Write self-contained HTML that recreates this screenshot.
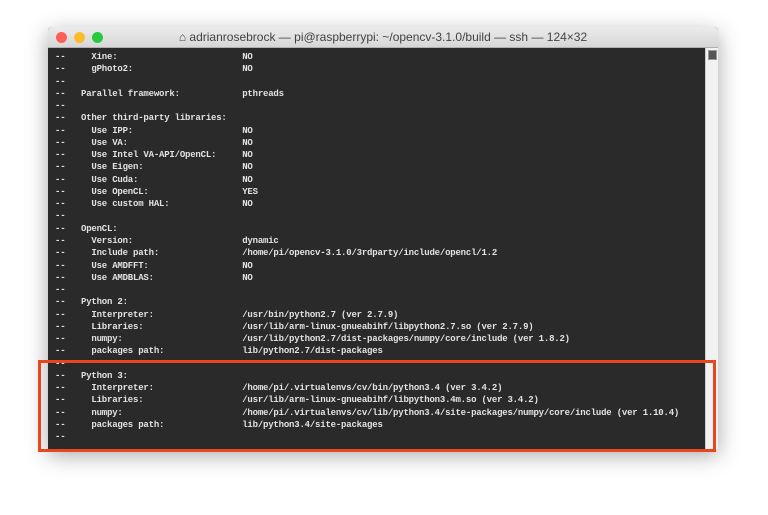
<!DOCTYPE html>
<html><head><style>
html,body{margin:0;padding:0;background:#fff;width:768px;height:515px;overflow:hidden;position:relative}
.win{position:absolute;left:48px;top:27px;width:670px;height:422px;background:#2a2a2a;box-shadow:0 6px 22px rgba(0,0,0,.35);border-radius:4px 4px 0 0;overflow:hidden}
.title{height:20px;background:linear-gradient(#ececec,#d6d6d6);border-bottom:1px solid #b0b0b0;font:12px "Liberation Sans",sans-serif;color:#444;text-align:center;line-height:20px;position:relative}
.dot{position:absolute;top:5px;width:11px;height:11px;border-radius:50%}
.sb{position:absolute;right:0;top:21px;width:12px;bottom:0;background:#f2f2f2;border-left:1px solid #ccc}
.sb div{margin:2px 2px;width:7px;height:8px;background:#555;border:1px solid #999}
pre{position:absolute;left:7px;top:24px;margin:0;font:bold 9px/12.26px "Liberation Mono",monospace;color:#e2e2e2;letter-spacing:-0.2px}
.red{position:absolute;left:38px;top:360px;width:672px;height:86px;border:3px solid #e8461c}
</style></head><body>
<div class="win">
<div class="title"><span class="dot" style="left:8px;background:#fc5f57"></span><span class="dot" style="left:26px;background:#fdbc2e"></span><span class="dot" style="left:44px;background:#28c840"></span>⌂ adrianrosebrock — pi@raspberrypi: ~/opencv-3.1.0/build — ssh — 124×32</div>
<div class="sb"><div></div></div>
<pre>--     Xine:                        NO
--     gPhoto2:                     NO
--
--   Parallel framework:            pthreads
--
--   Other third-party libraries:
--     Use IPP:                     NO
--     Use VA:                      NO
--     Use Intel VA-API/OpenCL:     NO
--     Use Eigen:                   NO
--     Use Cuda:                    NO
--     Use OpenCL:                  YES
--     Use custom HAL:              NO
--
--   OpenCL:
--     Version:                     dynamic
--     Include path:                /home/pi/opencv-3.1.0/3rdparty/include/opencl/1.2
--     Use AMDFFT:                  NO
--     Use AMDBLAS:                 NO
--
--   Python 2:
--     Interpreter:                 /usr/bin/python2.7 (ver 2.7.9)
--     Libraries:                   /usr/lib/arm-linux-gnueabihf/libpython2.7.so (ver 2.7.9)
--     numpy:                       /usr/lib/python2.7/dist-packages/numpy/core/include (ver 1.8.2)
--     packages path:               lib/python2.7/dist-packages
--
--   Python 3:
--     Interpreter:                 /home/pi/.virtualenvs/cv/bin/python3.4 (ver 3.4.2)
--     Libraries:                   /usr/lib/arm-linux-gnueabihf/libpython3.4m.so (ver 3.4.2)
--     numpy:                       /home/pi/.virtualenvs/cv/lib/python3.4/site-packages/numpy/core/include (ver 1.10.4)
--     packages path:               lib/python3.4/site-packages
--</pre>
</div>
<div class="red"></div>
</body></html>
